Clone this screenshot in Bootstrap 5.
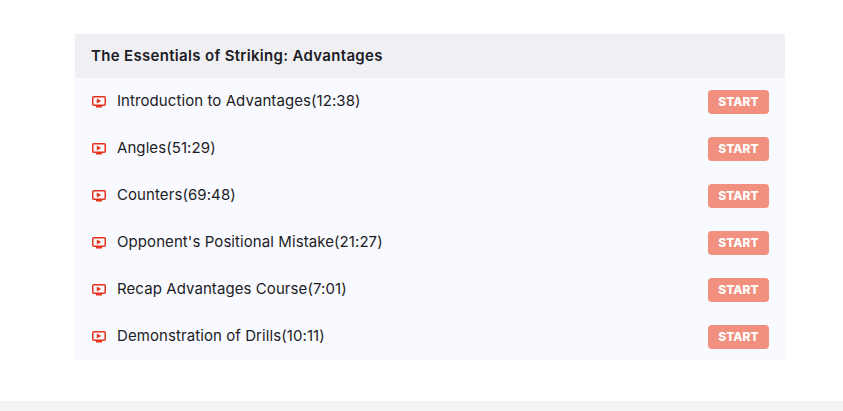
<!DOCTYPE html>
<html lang="en">
<head>
  <meta charset="UTF-8" />
  <meta name="viewport" content="width=device-width, initial-scale=1.0"/>
  <title>The Essentials of Striking: Advantages</title>
  <link href="https://cdn.jsdelivr.net/npm/bootstrap@5.3.0/dist/css/bootstrap.min.css" rel="stylesheet"/>
  <style>
    body {
      background-color: #fff;
      color: #1c1c24;
      font-family: "Inter", "Liberation Sans", sans-serif;
      height: 411px;
      overflow: hidden;
    }
    .course-wrap {
      padding: 34px 58px 41px 75px;
    }
    .course-card {
      background-color: #f9faff;
      border: none;
      border-radius: 0;
    }
    .course-head {
      background-color: #f0eff4;
      border: none;
      border-radius: 0;
      height: 44px;
      padding: 0 16px;
      font-size: 15px;
      font-weight: 600;
      letter-spacing: .32px;
      line-height: 44px;
    }
    .lesson-row {
      background-color: #f9faff;
      border: none;
      border-top: 1px solid #fff;
      height: 47px;
      padding: 0 16px;
      font-size: 15px;
      letter-spacing: .08px;
      color: #1c1c24;
    }
    .lesson-icon {
      width: 16px;
      height: 14px;
      margin-right: 10px;
      flex-shrink: 0;
    }
    .start-btn {
      background-color: #f1907e;
      border: none;
      border-radius: 4px;
      color: #fff;
      width: 61px;
      height: 24px;
      padding: 0;
      font-size: 12px;
      font-weight: 800;
      line-height: 24px;
    }
    .foot-strip {
      background-color: #f3f4f6;
      height: 10px;
    }
  </style>
</head>
<body>
  <div class="course-wrap">
    <div class="card course-card">
      <div class="course-head">The Essentials of Striking: Advantages</div>
      <ul class="list-group list-group-flush">
        <li class="list-group-item lesson-row d-flex align-items-center justify-content-between">
          <span class="d-flex align-items-center"><svg class="lesson-icon" viewBox="0 0 16 14"><rect x="1.75" y="1.75" width="12.5" height="8.5" rx="1" fill="none" stroke="#e8311a" stroke-width="1.5"/><path d="M5.8 3.6 10.2 6 5.8 8.4z" fill="#e8311a"/><path d="M5 11.7h6" stroke="#e8311a" stroke-width="1.6"/></svg>Introduction to Advantages(12:38)</span>
          <button class="btn start-btn">START</button>
        </li>
        <li class="list-group-item lesson-row d-flex align-items-center justify-content-between">
          <span class="d-flex align-items-center"><svg class="lesson-icon" viewBox="0 0 16 14"><rect x="1.75" y="1.75" width="12.5" height="8.5" rx="1" fill="none" stroke="#e8311a" stroke-width="1.5"/><path d="M5.8 3.6 10.2 6 5.8 8.4z" fill="#e8311a"/><path d="M5 11.7h6" stroke="#e8311a" stroke-width="1.6"/></svg>Angles(51:29)</span>
          <button class="btn start-btn">START</button>
        </li>
        <li class="list-group-item lesson-row d-flex align-items-center justify-content-between">
          <span class="d-flex align-items-center"><svg class="lesson-icon" viewBox="0 0 16 14"><rect x="1.75" y="1.75" width="12.5" height="8.5" rx="1" fill="none" stroke="#e8311a" stroke-width="1.5"/><path d="M5.8 3.6 10.2 6 5.8 8.4z" fill="#e8311a"/><path d="M5 11.7h6" stroke="#e8311a" stroke-width="1.6"/></svg>Counters(69:48)</span>
          <button class="btn start-btn">START</button>
        </li>
        <li class="list-group-item lesson-row d-flex align-items-center justify-content-between">
          <span class="d-flex align-items-center"><svg class="lesson-icon" viewBox="0 0 16 14"><rect x="1.75" y="1.75" width="12.5" height="8.5" rx="1" fill="none" stroke="#e8311a" stroke-width="1.5"/><path d="M5.8 3.6 10.2 6 5.8 8.4z" fill="#e8311a"/><path d="M5 11.7h6" stroke="#e8311a" stroke-width="1.6"/></svg>Opponent's Positional Mistake(21:27)</span>
          <button class="btn start-btn">START</button>
        </li>
        <li class="list-group-item lesson-row d-flex align-items-center justify-content-between">
          <span class="d-flex align-items-center"><svg class="lesson-icon" viewBox="0 0 16 14"><rect x="1.75" y="1.75" width="12.5" height="8.5" rx="1" fill="none" stroke="#e8311a" stroke-width="1.5"/><path d="M5.8 3.6 10.2 6 5.8 8.4z" fill="#e8311a"/><path d="M5 11.7h6" stroke="#e8311a" stroke-width="1.6"/></svg>Recap Advantages Course(7:01)</span>
          <button class="btn start-btn">START</button>
        </li>
        <li class="list-group-item lesson-row d-flex align-items-center justify-content-between">
          <span class="d-flex align-items-center"><svg class="lesson-icon" viewBox="0 0 16 14"><rect x="1.75" y="1.75" width="12.5" height="8.5" rx="1" fill="none" stroke="#e8311a" stroke-width="1.5"/><path d="M5.8 3.6 10.2 6 5.8 8.4z" fill="#e8311a"/><path d="M5 11.7h6" stroke="#e8311a" stroke-width="1.6"/></svg>Demonstration of Drills(10:11)</span>
          <button class="btn start-btn">START</button>
        </li>
      </ul>
    </div>
  </div>
  <div class="foot-strip"></div>
</body>
</html>
